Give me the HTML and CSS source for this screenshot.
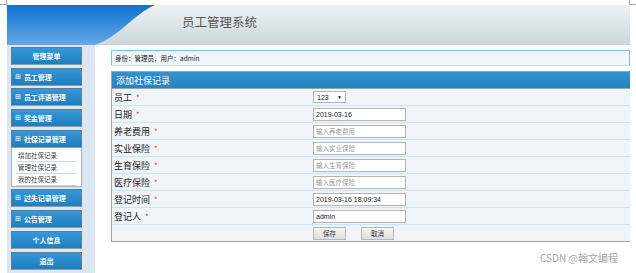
FILE: index.html
```html
<!DOCTYPE html>
<html>
<head>
<meta charset="utf-8">
<link rel="stylesheet" href="styles.css">
</head>
<body>
<div class="page">
	<div class="header">
		<svg class="wave" width="160" height="40" viewBox="0 0 160 40">
			<defs>
				<linearGradient id="blue" x1="0" y1="0" x2="0" y2="1">
					<stop offset="0" stop-color="#0e72d2"/>
					<stop offset="1" stop-color="#66a8e6"/>
				</linearGradient>
			</defs>
			<path d="M0 0 H148 C128 8, 112 32, 88 40 H0 Z" fill="url(#blue)"/>
		</svg>
		<h1 class="title">员工管理系统</h1>
	</div>
	<div class="content">
		<div class="sidebar">
			<div class="menu-btn center">管理菜单</div>
			<div class="menu-btn"><span class="plus">⊞</span>员工管理</div>
			<div class="menu-btn"><span class="plus">⊞</span>员工评语管理</div>
			<div class="menu-btn"><span class="plus">⊞</span>奖金管理</div>
			<div class="menu-btn open"><span class="plus">⊞</span>社保记录管理</div>
			<ul class="submenu">
				<li>增加社保记录</li>
				<li>管理社保记录</li>
				<li>我的社保记录</li>
			</ul>
			<div class="menu-btn"><span class="plus">⊞</span>过失记录管理</div>
			<div class="menu-btn"><span class="plus">⊞</span>公告管理</div>
			<div class="menu-btn center">个人信息</div>
			<div class="menu-btn center">退出</div>
		</div>
		<div class="main">
			<div class="info">身份：管理员，用户：admin</div>
			<div class="panel">
				<div class="panel-title">添加社保记录</div>
				<div class="row">
					<div class="label">员工 <span class="star">*</span></div>
					<div class="field"><div class="select">123<span class="arrow">▼</span></div></div>
				</div>
				<div class="row">
					<div class="label">日期 <span class="star">*</span></div>
					<div class="field"><input class="text" type="text" value="2019-03-16"></div>
				</div>
				<div class="row">
					<div class="label">养老费用 <span class="star">*</span></div>
					<div class="field"><input class="text" type="text" placeholder="输入养老费用"></div>
				</div>
				<div class="row">
					<div class="label">实业保险 <span class="star">*</span></div>
					<div class="field"><input class="text" type="text" placeholder="输入实业保险"></div>
				</div>
				<div class="row">
					<div class="label">生育保险 <span class="star">*</span></div>
					<div class="field"><input class="text" type="text" placeholder="输入生育保险"></div>
				</div>
				<div class="row">
					<div class="label">医疗保险 <span class="star">*</span></div>
					<div class="field"><input class="text" type="text" placeholder="输入医疗保险"></div>
				</div>
				<div class="row">
					<div class="label">登记时间 <span class="star">*</span></div>
					<div class="field"><input class="text" type="text" value="2019-03-16 18:09:34"></div>
				</div>
				<div class="row">
					<div class="label">登记人 <span class="star">*</span></div>
					<div class="field"><input class="text" type="text" value="admin"></div>
				</div>
				<div class="row last">
					<div class="label"></div>
					<div class="field">
						<button class="btn">保存</button>
						<button class="btn">取消</button>
					</div>
				</div>
			</div>
		</div>
	</div>
	<div class="watermark">CSDN @翰文编程</div>
</div>
</body>
</html>
```

FILE: styles.css
```css
body {margin:0;
	background:#fff;
	font-family:"Noto Sans CJK SC", "Liberation Sans", sans-serif;}
.page {position:relative;
	width:623px;
	height:268px;
	padding:5px 6px 0 7px;
	overflow:hidden;}
.page::before {content:"";
	position:absolute;
	left:0; top:0;
	width:7px; height:5px;
	border-right:1px solid #aaa;
	border-bottom:1px solid #aaa;
	box-sizing:border-box;}
.page::after {content:"";
	position:absolute;
	left:629px; top:0;
	width:7px; height:5px;
	border-left:1px solid #aaa;
	border-bottom:1px solid #aaa;
	box-sizing:border-box;}

.header {position:relative;
	height:40px;
	background:linear-gradient(#eff2f4, #cad7dd);
	display:flex;
	align-items:center;}
.wave {position:absolute;
	left:0; top:0;}
.title {position:relative;
	margin:0 0 8px 175px;
	font-size:12.5px;
	font-weight:normal;
	color:#555;}

.content {display:flex;
	height:228px;}
.sidebar {width:71px;
	padding:2px 13px 0 4px;
	background:#dce6f1;
	display:flex;
	flex-direction:column;
	gap:2.7px;}
.menu-btn {height:18px;
	flex-shrink:0;
	box-sizing:border-box;
	border:1px solid #5f7d8c;
	border-bottom-color:#8aa2ae;
	background:linear-gradient(#3598d8, #1f7dbd);
	color:#fff;
	font-size:7px;
	font-weight:bold;
	display:flex;
	align-items:center;
	padding-left:3px;}
.menu-btn.center {justify-content:center;
	padding-left:0;}
.plus {font-size:7px;
	margin-right:3px;
	font-weight:normal;
	font-family:"DejaVu Sans", sans-serif;}
.menu-btn.open {margin-bottom:-2.7px;}
.submenu {list-style:none;
	margin:0;
	padding:2px 4px 4px 4px;
	height:39px;
	flex-shrink:0;
	box-sizing:border-box;
	background:#fff;
	border:1px solid #a8b4bc;
	border-top:none;}
.submenu li {height:11px;
	line-height:10px;
	font-size:6.5px;
	color:#444;
	padding-left:2px;
	border-bottom:1px solid #c6d9ea;}

.main {flex:1;
	padding:5px 0 0 16px;}
.info {height:16px;
	box-sizing:border-box;
	border:1px solid #74c6e6;
	border-bottom-color:#c5dcea;
	background:#f1f4f8;
	font-size:6.5px;
	color:#222;
	display:flex;
	align-items:center;
	padding-left:3px;}
.panel {margin-top:5px;
	border-top:1px solid #9aa4aa;
	border-left:1px solid #9aa4aa;
	border-bottom:1px solid #9aa4aa;}
.panel-title {height:16px;
	background:linear-gradient(#2f93cf, #2583bf);
	border-bottom:1px solid #8fa6b3;
	color:#fff;
	font-size:9px;
	display:flex;
	align-items:center;
	padding-left:4px;}
.row {display:flex;
	align-items:center;
	height:16px;
	background:#f0f4f8;
	border-bottom:1px solid #cfe2f1;}
.row.last {border-bottom:none;}
.label {width:199px;
	padding-left:2px;
	font-size:9px;
	color:#222;}
.star {color:#e33;
	font-size:8px;
	margin-left:2px;}
.field {display:flex;
	align-items:center;
	gap:15px;}
.text {width:93px;
	height:13px;
	box-sizing:border-box;
	margin:0;
	padding:0 2px;
	border:1px solid #b4b4b4;
	background:#fff;
	font-family:"Liberation Sans", "Noto Sans CJK SC", sans-serif;
	font-size:7px;
	color:#222;}
.text::placeholder {color:#999;
	font-family:"Noto Sans CJK SC", sans-serif;
	font-size:6.5px;}
.select {width:33px;
	height:12px;
	box-sizing:border-box;
	border:1px solid #b4b4b4;
	background:#fff;
	font-family:"Liberation Sans", sans-serif;
	font-size:7px;
	color:#222;
	display:flex;
	align-items:center;
	justify-content:space-between;
	padding:0 3px;}
.arrow {font-size:5px;}
.btn {width:33px;
	height:13px;
	margin:0;
	padding:0;
	border:1px solid #b8b8b8;
	background:linear-gradient(#f6f6f6, #dedede);
	font-family:"Noto Sans CJK SC", sans-serif;
	font-size:6.5px;
	color:#333;}
.watermark {position:absolute;
	left:540px; top:250px;
	font-size:10px;
	color:#a8a8a8;
	white-space:nowrap;}
```
